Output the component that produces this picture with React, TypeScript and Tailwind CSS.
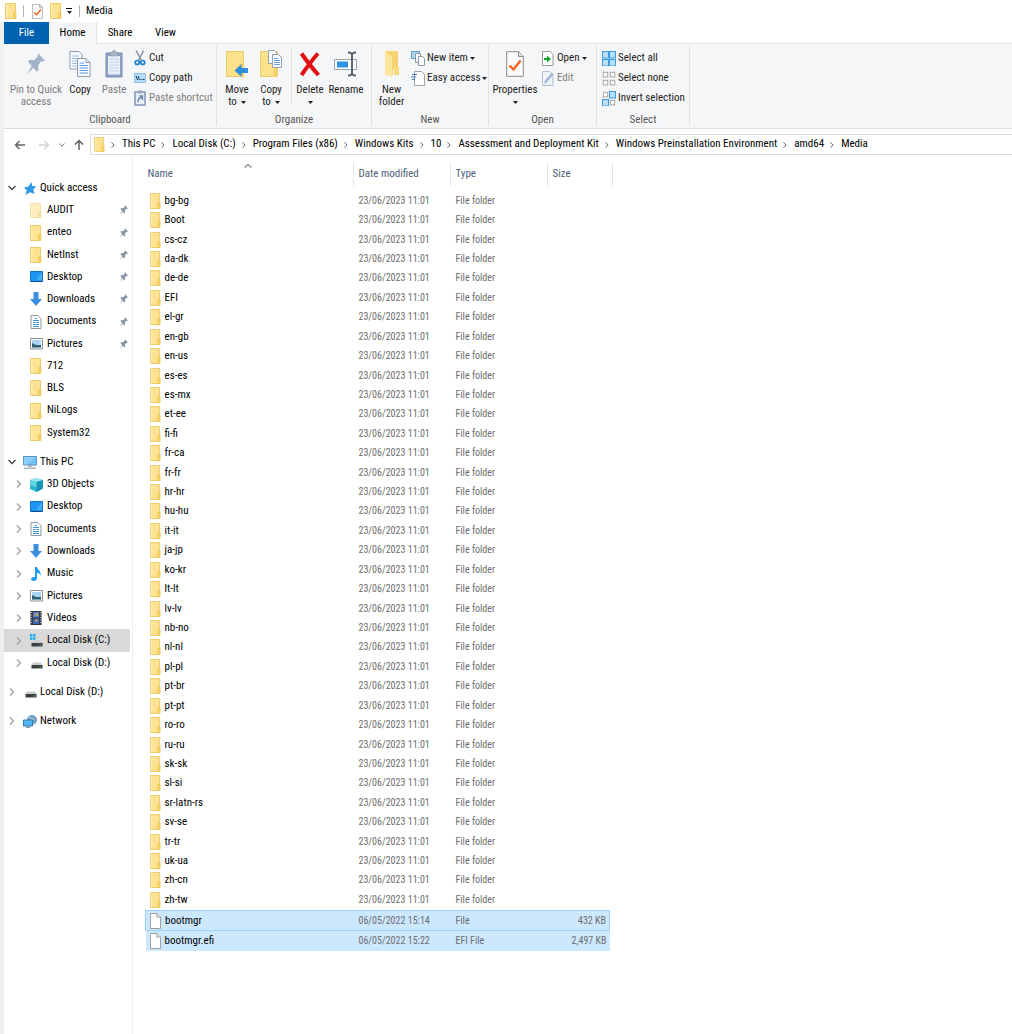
import type { ReactNode } from "react";
import { clsx } from "clsx";

type IconProps = { className?: string };

const FolderIcon = ({ className = "h-4 w-3" }: IconProps) => (
  <svg viewBox="0 0 12 16" preserveAspectRatio="none" className={clsx("shrink-0", className)}>
    <path d="M.5.5h10v15H.5z" fill="#fde391" stroke="#eccb68" />
    <path d="M8.5 9.5h2.5v6H8.5z" fill="#f8d266" stroke="#e9c45b" strokeWidth=".7" />
    <path d="M1 1h1.5v14H1z" fill="#ffeeb4" />
  </svg>
);

const OpenFolderIcon = ({ className }: IconProps) => (
  <svg viewBox="0 0 16 28" className={className}>
    <path d="M1 1h13v16l-5 3v5H1z" fill="#f7d271" />
    <path d="M1 1l7 6v20l-7-3z" fill="#fde59b" />
    <path d="M10 17h5v8h-5z" fill="#f9d877" />
  </svg>
);

const PageIcon = ({ className = "h-4 w-3" }: IconProps) => (
  <svg viewBox="0 0 12 16" preserveAspectRatio="none" className={clsx("shrink-0", className)}>
    <path d="M.5.5h7l4 3.5v11.5H.5z" fill="#fff" stroke="#9a9a9a" />
    <path d="M7.5.5V4h4" fill="#eee" stroke="#9a9a9a" />
  </svg>
);

const CheckPageIcon = ({ className }: IconProps) => (
  <svg viewBox="0 0 18 26" preserveAspectRatio="none" className={className}>
    <path d="M.7.7h12l4.6 4.6v20H.7z" fill="#fafafa" stroke="#8d8d8d" />
    <path d="M12.5.7v4.8h4.8" fill="#e4e4e4" stroke="#8d8d8d" />
    <path d="M3.5 14.5l4 4 7-9" fill="none" stroke="#f0641e" strokeWidth="2.4" />
  </svg>
);

const PinIcon = ({ className = "h-3 w-2.5", color = "#8796a5" }: IconProps & { color?: string }) => (
  <svg viewBox="0 0 18 20" preserveAspectRatio="none" className={clsx("shrink-0", className)}>
    <path d="M11 0l7 7-2.2 1-1.6-.5-3 3.5.3 4.5L9.7 17l-3.5-3.7L0 19.5l4.7-7.7L1 8l1.5-1.8 4.7.3 3.6-3.5z" fill={color} />
  </svg>
);

const CopyIcon = () => (
  <svg viewBox="0 0 22 28" className="h-7 w-[22px]">
    <path d="M1 1.5h9l3 3V19H1z" fill="#f8fbff" stroke="#8f9aa8" />
    <path d="M3 6h7M3 8.5h8M3 11h8M3 13.5h8M3 16h5" stroke="#9bbce4" />
    <path d="M8.5 8.5h8.5l4 4v14H8.5z" fill="#f8fbff" stroke="#8f9aa8" />
    <path d="M17 8.5v4h4" fill="#dde6f2" stroke="#8f9aa8" />
    <path d="M10.5 13h5M10.5 15.5h8.5M10.5 18h8.5M10.5 20.5h8.5M10.5 23h8.5" stroke="#5d9be0" />
  </svg>
);

const PasteIcon = () => (
  <svg viewBox="0 0 18 28" className="h-7 w-[18px]">
    <path d="M1 3h16v24H1z" fill="#8ea2c3" stroke="#7b8fb2" />
    <path d="M3 6h12v18.5H3z" fill="#e9eff8" />
    <path d="M4 9h10M4 12h10M4 15h10M4 18h10M4 21h10" stroke="#c8d5ea" />
    <path d="M5 2.5h2l1-2h2l1 2h2V6H5z" fill="#a9b3c2" stroke="#8592a8" strokeWidth=".6" />
  </svg>
);

const CutIcon = () => (
  <svg viewBox="0 0 12 16" className="h-4 w-3">
    <path d="M2 .5l5.5 10M9.5.5L4.5 10.5" stroke="#8494a6" strokeWidth="1.5" />
    <circle cx="3.2" cy="12.5" r="2" fill="none" stroke="#1b84d4" strokeWidth="1.7" />
    <circle cx="8.7" cy="12.5" r="2" fill="none" stroke="#1b84d4" strokeWidth="1.7" />
  </svg>
);

const CopyPathIcon = () => (
  <svg viewBox="0 0 12 10" className="h-2.5 w-3">
    <path d="M.5.5h11v9H.5z" fill="#b5dcf8" stroke="#8dc3ea" />
    <path d="M2 3l1.5 4M4 3l1.5 4M6.5 6.5h1M8.5 6.5h2" stroke="#1d3c5c" />
  </svg>
);

const PasteShortcutIcon = () => (
  <svg viewBox="0 0 12 16" className="h-4 w-3">
    <path d="M1 2h10v13H1z" fill="#e7edf6" stroke="#8195b8" strokeWidth="1.5" />
    <path d="M4 .5h4v3H4z" fill="#97a4b9" />
    <path d="M4 12c0-3 1-4.5 4-4.5M5.5 6H8.5v4" fill="none" stroke="#6b83ac" strokeWidth="1.3" />
  </svg>
);

const MoveToIcon = () => (
  <svg viewBox="0 0 22 28" className="h-7 w-[22px]">
    <path d="M.5 1.5h17v25H.5z" fill="#fde18b" stroke="#eccb6b" />
    <path d="M13.5 14h4v12.5h-4z" fill="#f8d164" />
    <path d="M8.5 20.5l7-6.5v4H22v5h-6.5v4z" fill="#2f8fdf" />
  </svg>
);

const CopyToIcon = () => (
  <svg viewBox="0 0 22 28" className="h-7 w-[22px]">
    <path d="M.5 1.5h17v25H.5z" fill="#fde18b" stroke="#eccb6b" />
    <path d="M13.5 14h4v12.5h-4z" fill="#f8d164" />
    <path d="M8.5.5h6l2 2v11h-8z" fill="#f6faff" stroke="#95a1b1" />
    <path d="M12.5 4.5h6l3 3v10h-9z" fill="#f6faff" stroke="#95a1b1" />
    <path d="M14 8.5h4M14 10.5h6M14 12.5h6M14 14.5h6" stroke="#6ba3e0" />
  </svg>
);

const DeleteIcon = () => (
  <svg viewBox="0 0 22 26" className="h-[26px] w-[22px]">
    <path d="M2.5 2.5C7 9 13 17 19.5 24M19 2.5C13 9 8 16 2.5 24" fill="none" stroke="#e00f13" strokeWidth="4" />
  </svg>
);

const RenameIcon = () => (
  <svg viewBox="0 0 24 26" className="h-[26px] w-6">
    <path d="M.5 8.5h22v10H.5z" fill="#fff" stroke="#98a2ad" />
    <path d="M3 10.5h11v6H3z" fill="#2f93e4" />
    <path d="M14 1.5c3 0 4 .5 4 2.5v18c0 2 1 2.5 4 2.5M22 1.5c-3 0-4 .5-4 2.5M14 24.5c3 0 4-.5 4-2.5" fill="none" stroke="#5d6670" strokeWidth="2" />
  </svg>
);

const NewItemIcon = () => (
  <svg viewBox="0 0 14 16" className="h-4 w-3.5">
    <path d="M.5 1.5h8v7h-8z" fill="#a9d8f5" stroke="#6b9ab8" />
    <path d="M4.5 3.5h5v9h-5z" fill="#f4f8fc" stroke="#8b98a6" />
    <path d="M7.5 6.5h4l2 2v7h-6z" fill="#fff" stroke="#8b98a6" />
  </svg>
);

const EasyAccessIcon = () => (
  <svg viewBox="0 0 14 16" className="h-4 w-3.5">
    <path d="M3.5 1.5h7l3 3v11h-10z" fill="#fff" stroke="#9aa3ad" />
    <path d="M1 4.5h5M0 7h5M1 9.5h3" stroke="#3a7cc0" />
  </svg>
);

const OpenIcon = () => (
  <svg viewBox="0 0 12 16" className="h-4 w-3">
    <path d="M.5 1.5h7.5l3 3v11H.5z" fill="#fff" stroke="#999" />
    <path d="M2 8h3V5.5l4 3.5-4 3.5V10H2z" fill="#16a62b" />
  </svg>
);

const EditIcon = () => (
  <svg viewBox="0 0 12 16" className="h-4 w-3">
    <path d="M.5 1.5h7.5l3 3v11H.5z" fill="#edf2f9" stroke="#b4c0d2" />
    <path d="M2 14l1-3.5 7-8 1.5 2-7 8z" fill="#a3b5d2" />
  </svg>
);

const squares = [
  [0.5, 1.5],
  [7.5, 1.5],
  [0.5, 9.5],
  [7.5, 9.5],
];

const SquaresIcon = ({ filled }: { filled: number[] }) => (
  <svg viewBox="0 0 14 16" className="h-4 w-3.5">
    {squares.map(([x, y], i) => {
      const on = filled.includes(i);
      return (
        <rect
          key={i}
          x={on ? x : x + 0.8}
          y={on ? y : y + 0.8}
          width={on ? 6 : 4.4}
          height={on ? 6.5 : 4.6}
          fill={on ? "#b9e0fb" : "#fff"}
          stroke={on ? "#3d9be6" : "#a5a5a5"}
        />
      );
    })}
  </svg>
);

const StarIcon = () => (
  <svg viewBox="0 0 12 13" className="h-[13px] w-3 shrink-0">
    <path d="M7.5 0l.8 4 3.7.3-2.7 3.4L10.5 12 6 10.2 1.5 13l1.2-4.8L0 5.5l4.5-1z" fill="#2f97e6" />
  </svg>
);

const DesktopIcon = () => (
  <svg viewBox="0 0 13 12" className="h-3 w-[13px]">
    <path d="M.5.5h12v10H.5z" fill="#1e96f5" stroke="#1173c2" />
    <path d="M1 10.5h11" stroke="#0d4f8c" />
    <path d="M12 1v8L6 9z" fill="#42adfb" />
  </svg>
);

const DownloadsIcon = () => (
  <svg viewBox="0 0 12 16" className="h-4 w-3">
    <path d="M3.5 1h5v7H12l-6 7-6-7h3.5z" fill="#3a8ee0" />
  </svg>
);

const DocumentsIcon = () => (
  <svg viewBox="0 0 12 16" className="h-4 w-3">
    <path d="M1 1.5h7l3 3v10H1z" fill="#fafcfd" stroke="#8c979f" />
    <path d="M5 4.5h2M3 6.5h6M3 8.5h2M6 8.5h3M3 10.5h6M3 12.5h6" stroke="#3f96cf" />
  </svg>
);

const PicturesIcon = () => (
  <svg viewBox="0 0 13 12" className="h-3 w-[13px]">
    <path d="M.5.5h12v10.5H.5z" fill="#fff" stroke="#8a8f94" />
    <path d="M2 2h9v7.5H2z" fill="#a9d4f2" />
    <path d="M2 5l4 2 5 0v2.5H2z" fill="#2f5f74" />
  </svg>
);

const ComputerIcon = () => (
  <svg viewBox="0 0 14 15" className="h-[15px] w-3.5 shrink-0">
    <path d="M.5 1.5h13v8.5H.5z" fill="#6fc0f6" stroke="#5b93bd" />
    <path d="M1 2h12L3 9.5H1z" fill="#8ccffa" />
    <path d="M5 10h4v2H5zM1 12.5h12V14H1z" fill="#a7b6c2" />
  </svg>
);

const ObjectsIcon = () => (
  <svg viewBox="0 0 13 15" className="h-[15px] w-[13px]">
    <path d="M0 3l6-2 7 2v8.5L6.5 15 0 12z" fill="#2fb6cf" />
    <path d="M0 3l6-2 7 2-6.5 2z" fill="#9be7f0" />
    <path d="M6.5 5L13 3v8.5L6.5 15z" fill="#1793b5" />
    <path d="M0 3l6.5 2v5L0 8z" fill="#63d3e3" />
  </svg>
);

const MusicIcon = () => (
  <svg viewBox="0 0 12 16" className="h-4 w-3">
    <path d="M5 1h2c.5 3 4.5 4 3.5 8.500-.5-1.500-2-2.500-3.500-2.700V12c0 2-1.500 3-3 3S1 14 1 13s1.500-2.500 4-2z" fill="#1b9cf0" />
  </svg>
);

const VideosIcon = () => (
  <svg viewBox="0 0 12 16" className="h-4 w-3">
    <path d="M.5 1h11v14H.5z" fill="#2b2f3a" />
    <path d="M3 2h6v5.5H3z" fill="#5b7fc4" />
    <path d="M3 8.5h6V14H3z" fill="#3a68b4" />
    <path d="M4 5l3-2 1.5 3zM4.5 12l2-3 1.5 2z" fill="#d8b447" />
    <path d="M1.7 2v12M10.3 2v12" stroke="#cfd3da" strokeDasharray="1 1.5" />
  </svg>
);

const DiskIcon = ({ windows = false }: { windows?: boolean }) => (
  <svg viewBox="0 0 13 14" className="h-3.5 w-[13px] shrink-0">
    {windows && (
      <path d="M0 0h2.3v2.5H0zM2.9 0h2.6v2.5H2.9zM0 3.2h2.3v2.5H0zM2.9 3.2h2.6v2.5H2.9z" fill="#18aef0" />
    )}
    <path d="M3 6.5h8L12.5 9h-11z" fill="#c9cdd0" />
    <path d="M1.5 9h11v3.5h-11z" fill="#3b3f43" />
    <path d="M9.5 10.5h1.5v1H9.5z" fill="#4fdc5a" />
  </svg>
);

const NetworkIcon = () => (
  <svg viewBox="0 0 14 15" className="h-[15px] w-3.5 shrink-0">
    <circle cx="9" cy="6" r="5" fill="#6d9fc4" />
    <path d="M6 3c2 0 2 3 5 2M5 8c3 0 4 2 6 1" stroke="#cfe3f0" fill="none" />
    <path d="M.5 6h9v6h-9z" fill="#52b4f2" stroke="#3279aa" />
    <path d="M3 12.5h4V14H3z" fill="#7c97aa" />
  </svg>
);

const Chevron = ({ dir = "right", className = "size-2 text-[#a0a0a0]" }: { dir?: "right" | "down" | "up" } & IconProps) => (
  <svg viewBox="0 0 8 8" className={clsx("shrink-0", className)} fill="none" stroke="currentColor" strokeWidth="1.3">
    {dir === "right" && <path d="M2 .5l3.5 3.5L2 7.5" />}
    {dir === "down" && <path d="M.5 2l3.5 3.5L7.5 2" />}
    {dir === "up" && <path d="M.5 5.5l3.5-3 3.5 3" />}
  </svg>
);

const Caret = () => (
  <svg viewBox="0 0 5 3" className="inline-block h-[3px] w-[5px] shrink-0">
    <path d="M0 0h5L2.5 3z" fill="#222" />
  </svg>
);

const Arrow = ({ path }: { path: string }) => (
  <svg viewBox="0 0 12 12" className="size-3" fill="none" stroke="currentColor" strokeWidth="1.5">
    <path d={path} />
  </svg>
);

interface BigButtonProps {
  icon: ReactNode;
  label: ReactNode;
  className: string;
  muted?: boolean;
}

const BigButton = ({ icon, label, className, muted }: BigButtonProps) => (
  <button
    type="button"
    className={clsx("flex shrink-0 flex-col items-center leading-3", muted ? "text-[#7d7d7d]" : "text-[#222]", className)}
  >
    <span className="mb-1 flex h-8 items-center justify-center">{icon}</span>
    {label}
  </button>
);

const SmallButton = ({ icon, label, muted, caret }: { icon: ReactNode; label: string; muted?: boolean; caret?: boolean }) => (
  <button
    type="button"
    className={clsx("flex h-5 items-center gap-0.5 whitespace-nowrap", muted ? "text-[#7d7d7d]" : "text-[#222]")}
  >
    <span className="flex w-3.5 justify-center">{icon}</span>
    <span>{label}</span>
    {caret && <Caret />}
  </button>
);

const RibbonGroup = ({ title, className, children }: { title: string; className: string; children: ReactNode }) => (
  <section className={clsx("my-0.5 flex shrink-0 flex-col border-r border-[#e0e2e4]", className)}>
    <div className="flex flex-1 items-start pt-0.5">{children}</div>
    <h2 className="text-center leading-3 text-[#555]">{title}</h2>
  </section>
);

interface NavItem {
  label: string;
  icon: ReactNode;
  pinned?: boolean;
}

const quickAccess: NavItem[] = [
  { label: "AUDIT", icon: <FolderIcon className="h-[15px] w-3 opacity-60" />, pinned: true },
  { label: "enteo", icon: <FolderIcon />, pinned: true },
  { label: "NetInst", icon: <FolderIcon />, pinned: true },
  { label: "Desktop", icon: <DesktopIcon />, pinned: true },
  { label: "Downloads", icon: <DownloadsIcon />, pinned: true },
  { label: "Documents", icon: <DocumentsIcon />, pinned: true },
  { label: "Pictures", icon: <PicturesIcon />, pinned: true },
  { label: "712", icon: <FolderIcon /> },
  { label: "BLS", icon: <FolderIcon /> },
  { label: "NiLogs", icon: <FolderIcon /> },
  { label: "System32", icon: <FolderIcon /> },
];

const thisPc: NavItem[] = [
  { label: "3D Objects", icon: <ObjectsIcon /> },
  { label: "Desktop", icon: <DesktopIcon /> },
  { label: "Documents", icon: <DocumentsIcon /> },
  { label: "Downloads", icon: <DownloadsIcon /> },
  { label: "Music", icon: <MusicIcon /> },
  { label: "Pictures", icon: <PicturesIcon /> },
  { label: "Videos", icon: <VideosIcon /> },
  { label: "Local Disk (C:)", icon: <DiskIcon windows /> },
  { label: "Local Disk (D:)", icon: <DiskIcon /> },
];

const NavRoot = ({ label, icon, open }: NavItem & { open?: boolean }) => (
  <a href="#" className="flex min-h-[22px] flex-1 items-center pl-1">
    <Chevron dir={open ? "down" : "right"} className={open ? "size-2 text-[#404040]" : "size-2 text-[#a0a0a0]"} />
    <span className="ml-1.5 flex w-4 justify-center">{icon}</span>
    <span className="ml-0.5">{label}</span>
  </a>
);

const NavRow = ({ label, icon, pinned, expandable, selected }: NavItem & { expandable?: boolean; selected?: boolean }) => (
  <a href="#" className={clsx("flex flex-1 items-center pr-0.5 pl-[11px]", selected && "bg-[#d9d9d9]")}>
    <span className="w-2">{expandable && <Chevron />}</span>
    <span className="ml-1.5 flex w-3.5 justify-center">{icon}</span>
    <span className="ml-1">{label}</span>
    {pinned && <PinIcon className="ml-auto h-2.5 w-2" />}
  </a>
);

const folders = [
  "bg-bg", "Boot", "cs-cz", "da-dk", "de-de", "EFI", "el-gr", "en-gb", "en-us", "es-es",
  "es-mx", "et-ee", "fi-fi", "fr-ca", "fr-fr", "hr-hr", "hu-hu", "it-it", "ja-jp", "ko-kr",
  "lt-lt", "lv-lv", "nb-no", "nl-nl", "pl-pl", "pt-br", "pt-pt", "ro-ro", "ru-ru", "sk-sk",
  "sl-si", "sr-latn-rs", "sv-se", "tr-tr", "uk-ua", "zh-cn", "zh-tw",
];

const rows = [
  ...folders.map((name) => ({ name, date: "23/06/2023 11:01", type: "File folder", size: "" })),
  { name: "bootmgr", date: "06/05/2022 15:14", type: "File", size: "432 KB" },
  { name: "bootmgr.efi", date: "06/05/2022 15:22", type: "EFI File", size: "2,497 KB" },
];

const crumbs = [
  "This PC",
  "Local Disk (C:)",
  "Program Files (x86)",
  "Windows Kits",
  "10",
  "Assessment and Deployment Kit",
  "Windows Preinstallation Environment",
  "amd64",
  "Media",
];

const TitleBar = () => (
  <header className="flex h-[22px] items-center pl-[5px]">
    <FolderIcon />
    <span className="mx-1.5 h-3 w-px bg-[#b5b5b5]" />
    <button type="button" aria-label="Properties" className="ml-0.5">
      <CheckPageIcon className="h-[15px] w-[11px]" />
    </button>
    <button type="button" aria-label="New folder" className="ml-[7px]">
      <FolderIcon />
    </button>
    <button type="button" aria-label="Customize Quick Access Toolbar" className="ml-1 flex flex-col items-center gap-0.5">
      <span className="h-px w-1.5 bg-black" />
      <Caret />
    </button>
    <span className="mr-1.5 ml-[7px] h-3 w-px bg-[#b5b5b5]" />
    <h1>Media</h1>
  </header>
);

const Tabs = () => (
  <nav className="flex h-[22px] pl-1">
    <button type="button" className="w-[45px] bg-[#0063b1] text-white">File</button>
    <button type="button" className="w-12 border-r border-[#e0e2e4] bg-[#f5f6f7]">Home</button>
    <div className="flex flex-1 border-b border-[#e0e2e4] pt-px">
      <button type="button" className="w-[46px]">Share</button>
      <button type="button" className="w-[45px]">View</button>
    </div>
  </nav>
);

const Ribbon = () => (
  <div className="ml-1 flex h-[85px] overflow-hidden border-b border-[#d9dbdc] bg-[#f5f6f7]">
    <RibbonGroup title="Clipboard" className="w-[213px]">
      <BigButton className="w-16" muted icon={<PinIcon className="h-[22px] w-[18px]" color="#a3b2c9" />} label={<>Pin to Quick<br />access</>} />
      <BigButton className="w-6" icon={<CopyIcon />} label="Copy" />
      <BigButton className="ml-2.5 w-6" muted icon={<PasteIcon />} label="Paste" />
      <div className="ml-[7px]">
        <SmallButton icon={<CutIcon />} label="Cut" />
        <SmallButton icon={<CopyPathIcon />} label="Copy path" />
        <SmallButton muted icon={<PasteShortcutIcon />} label="Paste shortcut" />
      </div>
    </RibbonGroup>
    <RibbonGroup title="Organize" className="w-[155px]">
      <BigButton className="ml-0.5 w-9" icon={<MoveToIcon />} label={<>Move<br /><span className="flex items-center gap-1">to <Caret /></span></>} />
      <BigButton className="w-8" icon={<CopyToIcon />} label={<>Copy<br /><span className="flex items-center gap-1">to <Caret /></span></>} />
      <span className="mx-1 h-14 w-px bg-[#e0e2e4]" />
      <BigButton className="w-7" icon={<DeleteIcon />} label={<>Delete<span className="flex h-3 items-center"><Caret /></span></>} />
      <BigButton className="ml-1 w-9" icon={<RenameIcon />} label="Rename" />
    </RibbonGroup>
    <RibbonGroup title="New" className="w-[117px]">
      <BigButton className="w-[39px]" icon={<OpenFolderIcon className="h-7 w-4" />} label={<>New<br />folder</>} />
      <div>
        <SmallButton icon={<NewItemIcon />} label="New item" caret />
        <SmallButton icon={<EasyAccessIcon />} label="Easy access" caret />
      </div>
    </RibbonGroup>
    <RibbonGroup title="Open" className="w-[108px]">
      <BigButton
        className="w-[52px]"
        icon={<CheckPageIcon className="h-[26px] w-[18px]" />}
        label={<>Properties<span className="flex h-3 items-center"><Caret /></span></>}
      />
      <div>
        <SmallButton icon={<OpenIcon />} label="Open" caret />
        <SmallButton muted icon={<EditIcon />} label="Edit" />
      </div>
    </RibbonGroup>
    <RibbonGroup title="Select" className="w-[93px]">
      <div className="pl-[5px]">
        <SmallButton icon={<SquaresIcon filled={[0, 1, 2, 3]} />} label="Select all" />
        <SmallButton icon={<SquaresIcon filled={[]} />} label="Select none" />
        <SmallButton icon={<SquaresIcon filled={[1, 2]} />} label="Invert selection" />
      </div>
    </RibbonGroup>
  </div>
);

const AddressBar = () => (
  <div className="flex pt-[5px] pl-3.5">
    <button type="button" aria-label="Back" className="text-[#606060]">
      <Arrow path="M11 6H1.500M5.500 2L1.500 6l4 4" />
    </button>
    <button type="button" aria-label="Forward" className="ml-3 text-[#d4d4d4]">
      <Arrow path="M1 6h9.500M6.500 2l4 4-4 4" />
    </button>
    <button type="button" aria-label="Recent locations" className="ml-[9px] text-[#707070]">
      <Chevron dir="down" className="size-1.5" />
    </button>
    <button type="button" aria-label="Up" className="ml-2 text-[#606060]">
      <Arrow path="M6 11V1.500M2 5.500l4-4 4 4" />
    </button>
    <div className="ml-[5px] flex h-[21px] min-w-0 flex-1 items-center overflow-hidden border border-r-0 border-[#d9d9d9] pl-[3px] whitespace-nowrap">
      <FolderIcon className="mr-[3px] h-[15px] w-[11px]" />
      {crumbs.map((crumb) => (
        <span key={crumb} className="flex items-center">
          <Chevron className="mx-0.5 size-1.5 text-[#606060]" />
          <button type="button" className="pr-[3px] pl-1">{crumb}</button>
        </span>
      ))}
    </div>
  </div>
);

const Sidebar = () => (
  <aside className="w-[133px] shrink-0 border-r border-[#f0f0f0] pt-[22px]">
    <nav className="flex flex-col gap-[7px] pr-0.5 pl-1">
      <div className="flex h-[267px] flex-col">
        <NavRoot label="Quick access" icon={<StarIcon />} open />
        {quickAccess.map((item) => (
          <NavRow key={item.label} {...item} />
        ))}
      </div>
      <div className="flex h-[223px] flex-col">
        <NavRoot label="This PC" icon={<ComputerIcon />} open />
        {thisPc.map((item) => (
          <NavRow key={item.label} {...item} expandable selected={item.label === "Local Disk (C:)"} />
        ))}
      </div>
      <NavRoot label="Local Disk (D:)" icon={<DiskIcon />} />
      <NavRoot label="Network" icon={<NetworkIcon />} />
    </nav>
  </aside>
);

const headCell = "p-0 text-left align-top font-normal text-[#4c607a]";
const headLabel = "flex h-6 items-center border-r border-[#e5e5e5]";

const FileList = () => (
  <main className="min-w-0 flex-1 pt-[7px] pl-3">
    <table className="h-[789px] w-[467px] table-fixed border-collapse">
      <colgroup>
        <col className="w-[208px]" />
        <col className="w-[97px]" />
        <col className="w-[97px]" />
        <col className="w-[62px]" />
        <col className="w-[3px]" />
      </colgroup>
      <thead>
        <tr className="h-[29px]">
          <th className={headCell}>
            <div className={clsx(headLabel, "pl-0.5")}>
              <span className="w-24">Name</span>
              <Chevron dir="up" className="mb-4 size-2 text-[#808080]" />
            </div>
          </th>
          <th className={headCell}>
            <div className={clsx(headLabel, "pl-[5px]")}>Date modified</div>
          </th>
          <th className={headCell}>
            <div className={clsx(headLabel, "pl-[5px]")}>Type</div>
          </th>
          <th className={headCell} colSpan={2}>
            <div className={clsx(headLabel, "pl-[5px]")}>Size</div>
          </th>
        </tr>
      </thead>
      <tbody>
        {rows.map(({ name, date, type, size }) => {
          const selected = size !== "";
          const focused = name === "bootmgr";
          const cell = clsx("p-0", selected && "bg-[#cce8ff]", focused && "border-y border-[#99d1ff]");
          const detail = clsx(cell, "text-[10px] whitespace-nowrap text-[#6d6d6d]");
          return (
            <tr key={name} className="leading-4">
              <td className={clsx(cell, focused && "border-l")}>
                <div className="flex items-center gap-1 pl-1">
                  {selected ? <PageIcon className="h-4 w-[11px]" /> : <FolderIcon className="h-4 w-[11px]" />}
                  {name}
                </div>
              </td>
              <td className={clsx(detail, "pl-[5px]")}>{date}</td>
              <td className={clsx(detail, "pl-[5px]")}>{type}</td>
              <td className={clsx(detail, "pr-[3px] text-right", focused && "border-r")}>{size}</td>
              <td className="p-0" />
            </tr>
          );
        })}
      </tbody>
    </table>
  </main>
);

export default function App() {
  return (
    <div className="flex min-h-screen flex-col bg-white font-['Roboto_Condensed','Roboto',sans-serif] text-[11px] text-black">
      <TitleBar />
      <div className="flex flex-1 flex-col border-l-4 border-[#f0f0f0]">
        <div className="-ml-1">
          <Tabs />
          <Ribbon />
          <AddressBar />
        </div>
        <div className="-ml-1 flex flex-1">
          <Sidebar />
          <FileList />
        </div>
      </div>
    </div>
  );
}
